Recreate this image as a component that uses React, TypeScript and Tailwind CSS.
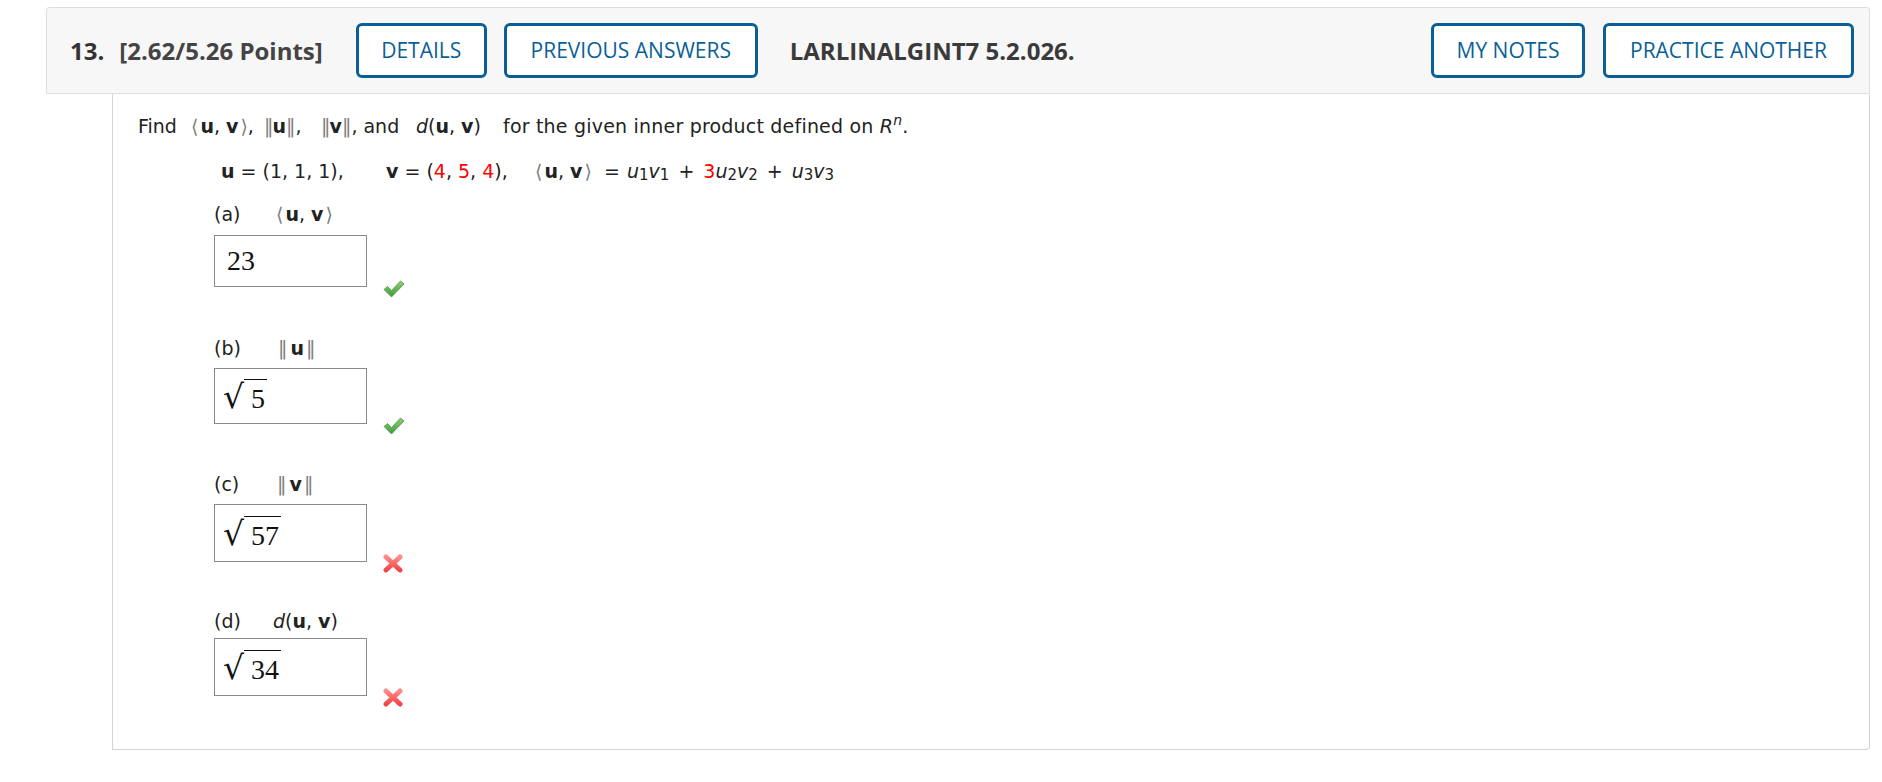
import React from "react";

const sans = { fontFamily: '"DejaVu Sans", Verdana, sans-serif' };

function Ang({ children }: { children: React.ReactNode }) {
  return (
    <span className="inline-flex whitespace-nowrap">
      <span className="text-[#808080] mr-[2px]">⟨</span>
      {children}
      <span className="text-[#808080] ml-[2px]">⟩</span>
    </span>
  );
}

function Norm({ children, wide }: { children: React.ReactNode; wide?: boolean }) {
  return (
    <span className="inline-flex whitespace-nowrap">
      <span className={`text-[#808080] ${wide ? "mr-[3px]" : "mr-[-1px]"}`}>‖</span>
      {children}
      <span className={`text-[#808080] ${wide ? "ml-[2px]" : "ml-[0px]"}`}>‖</span>
    </span>
  );
}

function UV() {
  return (
    <span className="whitespace-pre">
      <b>u</b>, <b>v</b>
    </span>
  );
}

function Sub({ n }: { n: string }) {
  return <span className="text-[15px] relative top-[4px] not-italic">{n}</span>;
}

function Check() {
  return (
    <svg width="22" height="18" viewBox="0 0 22 18" className="shrink-0 mb-[-11px]">
      <defs>
        <linearGradient id="gck" x1="0" y1="0" x2="0" y2="1">
          <stop offset="0" stopColor="#8fd07a" />
          <stop offset="1" stopColor="#3e9a3a" />
        </linearGradient>
      </defs>
      <path
        d="M1 9.5 L4.5 6.5 L8.5 10.5 L17.5 1 L21 4 L8.5 17 Z"
        fill="url(#gck)"
        stroke="#4b9a44"
        strokeWidth="0.8"
        strokeLinejoin="round"
      />
    </svg>
  );
}

function Cross() {
  return (
    <svg width="20" height="19" viewBox="0 0 20 19" className="shrink-0 mb-[-11px]">
      <defs>
        <linearGradient id="gx" x1="0" y1="0" x2="0" y2="1">
          <stop offset="0" stopColor="#ff8a8a" />
          <stop offset="1" stopColor="#f04848" />
        </linearGradient>
      </defs>
      <path d="M3 3 L17 16 M17 3 L3 16" stroke="url(#gx)" strokeWidth="5" strokeLinecap="round" fill="none" />
    </svg>
  );
}

function Box({ h, children }: { h: string; children: React.ReactNode }) {
  return (
    <div className={`w-[153px] ${h} border border-[#8a8a8a] bg-white flex items-center pl-[12px]`}>
      <span
        className="text-[28px] text-[#111] leading-none"
        style={{ fontFamily: '"Liberation Serif", "DejaVu Serif", serif' }}
      >
        {children}
      </span>
    </div>
  );
}

function Sqrt({ v }: { v: string }) {
  return (
    <span className="inline-flex items-start ml-[-4px]">
      <span className="text-[33px] leading-none relative top-[1px]" style={{ fontFamily: '"DejaVu Serif", serif' }}>
        √
      </span>
      <span className="border-t-[1.5px] border-[#111] pt-[5px] pl-[7px] pr-[2px] leading-none">{v}</span>
    </span>
  );
}

function HeaderBtn({ w, children }: { w: string; children: React.ReactNode }) {
  return (
    <div
      className={`${w} h-[55px] shrink-0 border-[3px] border-[#0b5f97] rounded-[6px] flex items-center justify-center text-[#0b5f97] text-[21px] bg-white`}
    >
      {children}
    </div>
  );
}

export default function App() {
  return (
    <div className="w-[1882px] h-[782px] bg-white overflow-hidden" style={{ fontFamily: '"Open Sans", sans-serif' }}>
      <div className="pt-[7px]">
        <div className="ml-[46px] w-[1824px] h-[87px] bg-[#f7f7f7] border border-[#dedede] rounded-t-[3px] flex items-center pl-[23px] pr-[15px]">
          <span className="text-[24px] font-bold text-[#333]">13.</span>
          <span className="ml-[15px] text-[24px] font-bold text-[#444]">[2.62/5.26 Points]</span>
          <div className="ml-[33px] flex items-center gap-[17px]">
            <HeaderBtn w="w-[131px]">DETAILS</HeaderBtn>
            <HeaderBtn w="w-[254px]">PREVIOUS ANSWERS</HeaderBtn>
          </div>
          <span className="ml-[32px] text-[24px] font-bold text-[#3a3a3a]">LARLINALGINT7 5.2.026.</span>
          <div className="ml-auto flex items-center gap-[18px]">
            <HeaderBtn w="w-[154px]">MY NOTES</HeaderBtn>
            <HeaderBtn w="w-[251px]">PRACTICE ANOTHER</HeaderBtn>
          </div>
        </div>

        <div
          className="ml-[112px] w-[1758px] h-[656px] border-l border-r border-b border-[#d4d4d4] rounded-br-[4px] pt-[20px] text-[19px] text-[#222] flex flex-col"
          style={sans}
        >
          <div className="pl-[25px] leading-[24px] h-[24px] flex whitespace-pre">
            <span className="w-[53px]">Find</span>
            <span className="w-[73px] flex">
              <Ang>
                <UV />
              </Ang>
              ,
            </span>
            <span className="w-[57px] flex">
              <Norm>
                <b>u</b>
              </Norm>
              ,
            </span>
            <span className="w-[95px] flex">
              <Norm>
                <b>v</b>
              </Norm>
              , and
            </span>
            <span className="w-[87px]">
              <i>d</i>(<UV />)
            </span>
            <span className="tracking-[0.2px]">
              for the given inner product defined on <i>R</i>
              <span className="text-[14px] relative top-[-8px] italic">n</span>.
            </span>
          </div>

          <div className="mt-[21px] pl-[108px] leading-[24px] h-[24px] flex whitespace-pre">
            <span className="w-[165px]">
              <b>u</b> = (1, 1, 1),
            </span>
            <span className="w-[149px]">
              <b>v</b> = (<span className="text-[#f00]">4</span>, <span className="text-[#f00]">5</span>,{" "}
              <span className="text-[#f00]">4</span>),
            </span>
            <span className="w-[69px] flex">
              <Ang>
                <UV />
              </Ang>
            </span>
            <span className="w-[23px]">=</span>
            <span className="flex">
              <i>u</i>
              <Sub n="1" />
              <i>v</i>
              <Sub n="1" />
              <span className="mx-[9px]">+</span>
              <span className="text-[#f00]">3</span>
              <i>u</i>
              <Sub n="2" />
              <i>v</i>
              <Sub n="2" />
              <span className="mx-[9px]">+</span>
              <i>u</i>
              <Sub n="3" />
              <i>v</i>
              <Sub n="3" />
            </span>
          </div>

          <div className="pl-[101px] flex flex-col">
            <div className="mt-[19px] leading-[24px] h-[24px] flex">
              <span className="w-[62px]">(a)</span>
              <Ang>
                <UV />
              </Ang>
            </div>
            <div className="mt-[9px] flex items-end gap-[16px]">
              <Box h="h-[52px]">23</Box>
              <Check />
            </div>

            <div className="mt-[49px] leading-[24px] h-[24px] flex">
              <span className="w-[64px]">(b)</span>
              <Norm wide>
                <b>u</b>
              </Norm>
            </div>
            <div className="mt-[8px] flex items-end gap-[16px]">
              <Box h="h-[56px]">
                <Sqrt v="5" />
              </Box>
              <Check />
            </div>

            <div className="mt-[48px] leading-[24px] h-[24px] flex">
              <span className="w-[63px]">(c)</span>
              <Norm wide>
                <b>v</b>
              </Norm>
            </div>
            <div className="mt-[8px] flex items-end gap-[16px]">
              <Box h="h-[58px]">
                <Sqrt v="57" />
              </Box>
              <Cross />
            </div>

            <div className="mt-[47px] leading-[24px] h-[24px] flex">
              <span className="w-[59px]">(d)</span>
              <span className="whitespace-pre">
                <i>d</i>(<UV />)
              </span>
            </div>
            <div className="mt-[5px] flex items-end gap-[16px]">
              <Box h="h-[58px]">
                <Sqrt v="34" />
              </Box>
              <Cross />
            </div>
          </div>
        </div>
      </div>
    </div>
  );
}
